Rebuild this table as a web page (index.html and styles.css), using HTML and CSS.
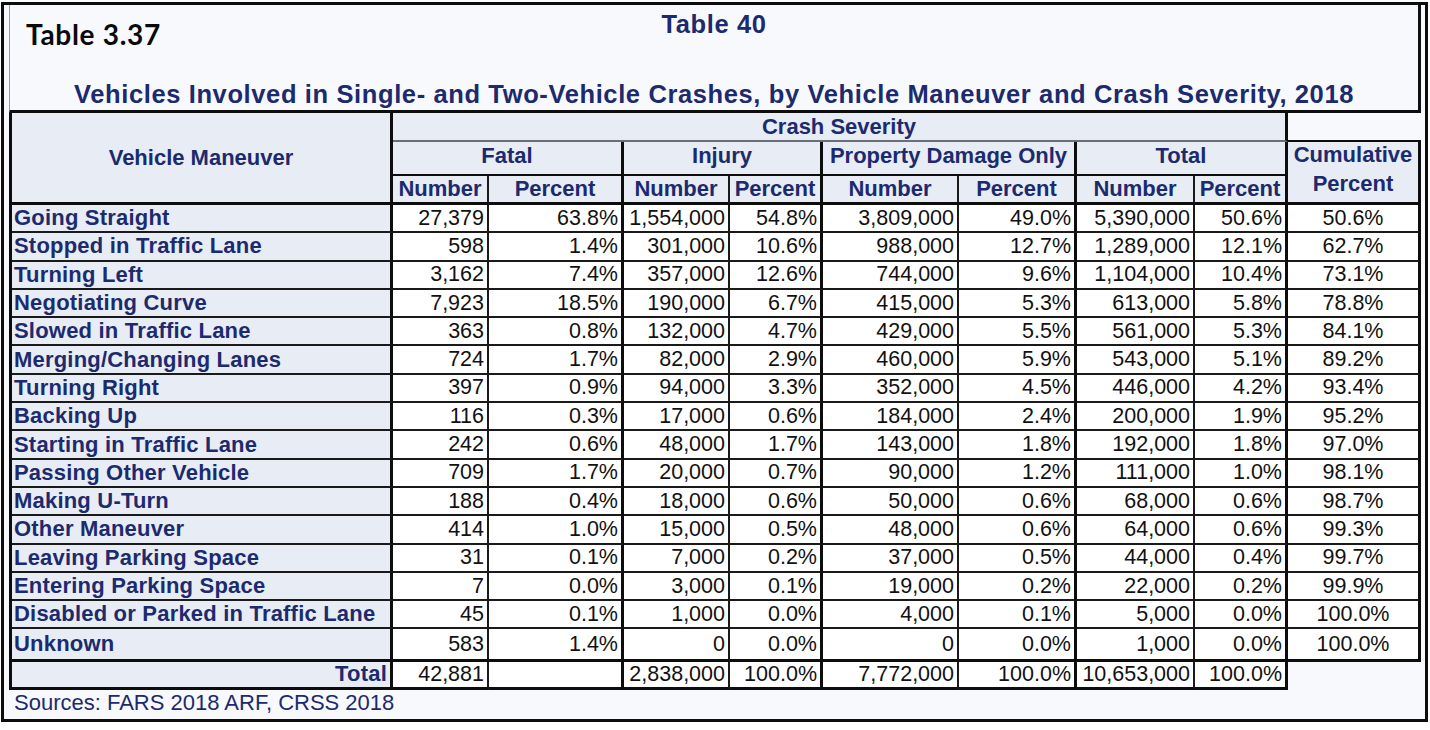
FILE: index.html
```html
<!DOCTYPE html>
<html lang="en">
<head>
<meta charset="utf-8">
<title>Table 3.37</title>
<link rel="stylesheet" href="styles.css">
</head>
<body>
<div class="frame">
  <div class="titlebox">
    <div class="toprow">
      <div class="t337">Table 3.37</div>
      <div class="t40">Table 40</div>
      <div></div>
    </div>
    <div class="maintitle">Vehicles Involved in Single- and Two-Vehicle Crashes, by Vehicle Maneuver and Crash Severity, 2018</div>
  </div>
  <div class="tbl">
    <div class="h vm">Vehicle Maneuver</div>
    <div class="h cs">Crash Severity</div>
    <div class="blank"></div>
    <div class="h grp">Fatal</div>
    <div class="h grp">Injury</div>
    <div class="h grp">Property Damage Only</div>
    <div class="h grp">Total</div>
    <div class="h cum">Cumulative<br>Percent</div>
    <div class="h sub">Number</div><div class="h sub pc">Percent</div>
    <div class="h sub">Number</div><div class="h sub pc">Percent</div>
    <div class="h sub">Number</div><div class="h sub pc">Percent</div>
    <div class="h sub">Number</div><div class="h sub pc">Percent</div>

    <div class="lbl">Going Straight</div><div class="n">27,379</div><div class="p">63.8%</div><div class="n">1,554,000</div><div class="p">54.8%</div><div class="n">3,809,000</div><div class="p">49.0%</div><div class="n">5,390,000</div><div class="p">50.6%</div><div class="c">50.6%</div>
    <div class="lbl">Stopped in Traffic Lane</div><div class="n">598</div><div class="p">1.4%</div><div class="n">301,000</div><div class="p">10.6%</div><div class="n">988,000</div><div class="p">12.7%</div><div class="n">1,289,000</div><div class="p">12.1%</div><div class="c">62.7%</div>
    <div class="lbl">Turning Left</div><div class="n">3,162</div><div class="p">7.4%</div><div class="n">357,000</div><div class="p">12.6%</div><div class="n">744,000</div><div class="p">9.6%</div><div class="n">1,104,000</div><div class="p">10.4%</div><div class="c">73.1%</div>
    <div class="lbl">Negotiating Curve</div><div class="n">7,923</div><div class="p">18.5%</div><div class="n">190,000</div><div class="p">6.7%</div><div class="n">415,000</div><div class="p">5.3%</div><div class="n">613,000</div><div class="p">5.8%</div><div class="c">78.8%</div>
    <div class="lbl">Slowed in Traffic Lane</div><div class="n">363</div><div class="p">0.8%</div><div class="n">132,000</div><div class="p">4.7%</div><div class="n">429,000</div><div class="p">5.5%</div><div class="n">561,000</div><div class="p">5.3%</div><div class="c">84.1%</div>
    <div class="lbl">Merging/Changing Lanes</div><div class="n">724</div><div class="p">1.7%</div><div class="n">82,000</div><div class="p">2.9%</div><div class="n">460,000</div><div class="p">5.9%</div><div class="n">543,000</div><div class="p">5.1%</div><div class="c">89.2%</div>
    <div class="lbl">Turning Right</div><div class="n">397</div><div class="p">0.9%</div><div class="n">94,000</div><div class="p">3.3%</div><div class="n">352,000</div><div class="p">4.5%</div><div class="n">446,000</div><div class="p">4.2%</div><div class="c">93.4%</div>
    <div class="lbl">Backing Up</div><div class="n">116</div><div class="p">0.3%</div><div class="n">17,000</div><div class="p">0.6%</div><div class="n">184,000</div><div class="p">2.4%</div><div class="n">200,000</div><div class="p">1.9%</div><div class="c">95.2%</div>
    <div class="lbl">Starting in Traffic Lane</div><div class="n">242</div><div class="p">0.6%</div><div class="n">48,000</div><div class="p">1.7%</div><div class="n">143,000</div><div class="p">1.8%</div><div class="n">192,000</div><div class="p">1.8%</div><div class="c">97.0%</div>
    <div class="lbl">Passing Other Vehicle</div><div class="n">709</div><div class="p">1.7%</div><div class="n">20,000</div><div class="p">0.7%</div><div class="n">90,000</div><div class="p">1.2%</div><div class="n">111,000</div><div class="p">1.0%</div><div class="c">98.1%</div>
    <div class="lbl">Making U-Turn</div><div class="n">188</div><div class="p">0.4%</div><div class="n">18,000</div><div class="p">0.6%</div><div class="n">50,000</div><div class="p">0.6%</div><div class="n">68,000</div><div class="p">0.6%</div><div class="c">98.7%</div>
    <div class="lbl">Other Maneuver</div><div class="n">414</div><div class="p">1.0%</div><div class="n">15,000</div><div class="p">0.5%</div><div class="n">48,000</div><div class="p">0.6%</div><div class="n">64,000</div><div class="p">0.6%</div><div class="c">99.3%</div>
    <div class="lbl">Leaving Parking Space</div><div class="n">31</div><div class="p">0.1%</div><div class="n">7,000</div><div class="p">0.2%</div><div class="n">37,000</div><div class="p">0.5%</div><div class="n">44,000</div><div class="p">0.4%</div><div class="c">99.7%</div>
    <div class="lbl">Entering Parking Space</div><div class="n">7</div><div class="p">0.0%</div><div class="n">3,000</div><div class="p">0.1%</div><div class="n">19,000</div><div class="p">0.2%</div><div class="n">22,000</div><div class="p">0.2%</div><div class="c">99.9%</div>
    <div class="lbl">Disabled or Parked in Traffic Lane</div><div class="n">45</div><div class="p">0.1%</div><div class="n">1,000</div><div class="p">0.0%</div><div class="n">4,000</div><div class="p">0.1%</div><div class="n">5,000</div><div class="p">0.0%</div><div class="c">100.0%</div>
    <div class="lbl last">Unknown</div><div class="n last">583</div><div class="p last">1.4%</div><div class="n last">0</div><div class="p last">0.0%</div><div class="n last">0</div><div class="p last">0.0%</div><div class="n last">1,000</div><div class="p last">0.0%</div><div class="c last">100.0%</div>

    <div class="lbl tot">Total</div><div class="n tot">42,881</div><div class="p tot"></div><div class="n tot">2,838,000</div><div class="p tot">100.0%</div><div class="n tot">7,772,000</div><div class="p tot">100.0%</div><div class="n tot">10,653,000</div><div class="p tot">100.0%</div>
  </div>
  <div class="src">Sources: FARS 2018 ARF, CRSS 2018</div>
</div>
</body>
</html>
```

FILE: styles.css
```css
* {
  box-sizing: border-box;
}

body {
  margin: 0;
  background: #ffffff;
  font-family: "Liberation Sans", Arial, sans-serif;
}

.frame {
  margin: 2px 0 0 1px;
  width: 1427px;
  height: 720px;
  border: 3px solid #0d0d0d;
  background: #f8f9fd;
  padding-left: 5px;
}

.titlebox {
  width: 1412px;
  height: 108px;
  border-left: 1px solid #9a9a9a;
  border-right: 3px solid #111111;
  border-bottom: 3px solid #0d0d0d;
}

.toprow {
  display: grid;
  grid-template-columns: 1fr auto 1fr;
  align-items: start;
}

.t337 {
  font-family: Lato, "Liberation Sans", sans-serif;
  font-weight: 700;
  font-size: 28px;
  line-height: 28px;
  letter-spacing: 0.7px;
  color: #0a0a0a;
  margin: 15px 0 0 16px;
}

.t40 {
  font-weight: 700;
  font-size: 25.5px;
  line-height: 25px;
  letter-spacing: 0.62px;
  color: #1c2a6e;
  margin-top: 7px;
}

.maintitle {
  font-weight: 700;
  font-size: 25.5px;
  line-height: 25px;
  letter-spacing: 0.62px;
  color: #1c2a6e;
  text-align: center;
  margin-top: 34px;
}

.tbl {
  display: grid;
  width: 1412px;
  border-left: 3px solid #0d0d0d;
  grid-template-columns: 381px 96px 135px 106px 93px 136px 118px 118px 93px 133px;
  grid-template-rows: 29px 34px 29px repeat(15, 28.3px) 32.5px 28px;
}

.tbl > div {
  display: flex;
  align-items: center;
  min-width: 0;
  white-space: nowrap;
}

.h {
  background: #e8ecf4;
  color: #1c2a6e;
  font-weight: 700;
  font-size: 22px;
  justify-content: center;
}

.vm {
  grid-row: 1 / 4;
  border-right: 3px solid #0d0d0d;
  border-bottom: 3px solid #0d0d0d;
}

.cs {
  grid-column: 2 / 10;
  border-right: 3px solid #0d0d0d;
  border-bottom: 2px solid #6b6f78;
}

.blank {
  border-bottom: 2px solid #0d0d0d;
}

.grp {
  grid-column: span 2;
  border-right: 3px solid #0d0d0d;
  border-bottom: 2px solid #0d0d0d;
  padding-bottom: 4px;
}

.cum {
  grid-column: 10;
  grid-row: 2 / 4;
  border-right: 3px solid #0d0d0d;
  border-bottom: 3px solid #0d0d0d;
  text-align: center;
  line-height: 29px;
  padding-bottom: 6px;
}

.sub {
  border-right: 2px solid #1a1a1a;
  border-bottom: 3px solid #0d0d0d;
}

.sub.pc {
  border-right: 3px solid #0d0d0d;
}

.lbl {
  background: #e8ecf4;
  color: #1c2a6e;
  font-weight: 700;
  font-size: 22px;
  letter-spacing: 0.2px;
  padding-left: 2px;
  border-right: 3px solid #0d0d0d;
  border-bottom: 2px solid #1a1a1a;
}

.n,
.p,
.c {
  background: #ffffff;
  color: #111111;
  font-size: 21.5px;
  border-bottom: 2px solid #1a1a1a;
}

.n,
.p {
  justify-content: flex-end;
  padding-right: 3px;
}

.n {
  border-right: 2px solid #1a1a1a;
}

.p,
.c {
  border-right: 3px solid #0d0d0d;
}

.c {
  justify-content: center;
}

.tbl > .last {
  border-bottom: 3px solid #0d0d0d;
}

.tbl > .tot {
  border-bottom: 3px solid #0d0d0d;
}

.lbl.tot {
  justify-content: flex-end;
  padding-right: 3px;
}

.src {
  font-size: 22px;
  line-height: 22px;
  color: #1c2a6e;
  margin-top: 2px;
  padding-left: 5px;
}
```
